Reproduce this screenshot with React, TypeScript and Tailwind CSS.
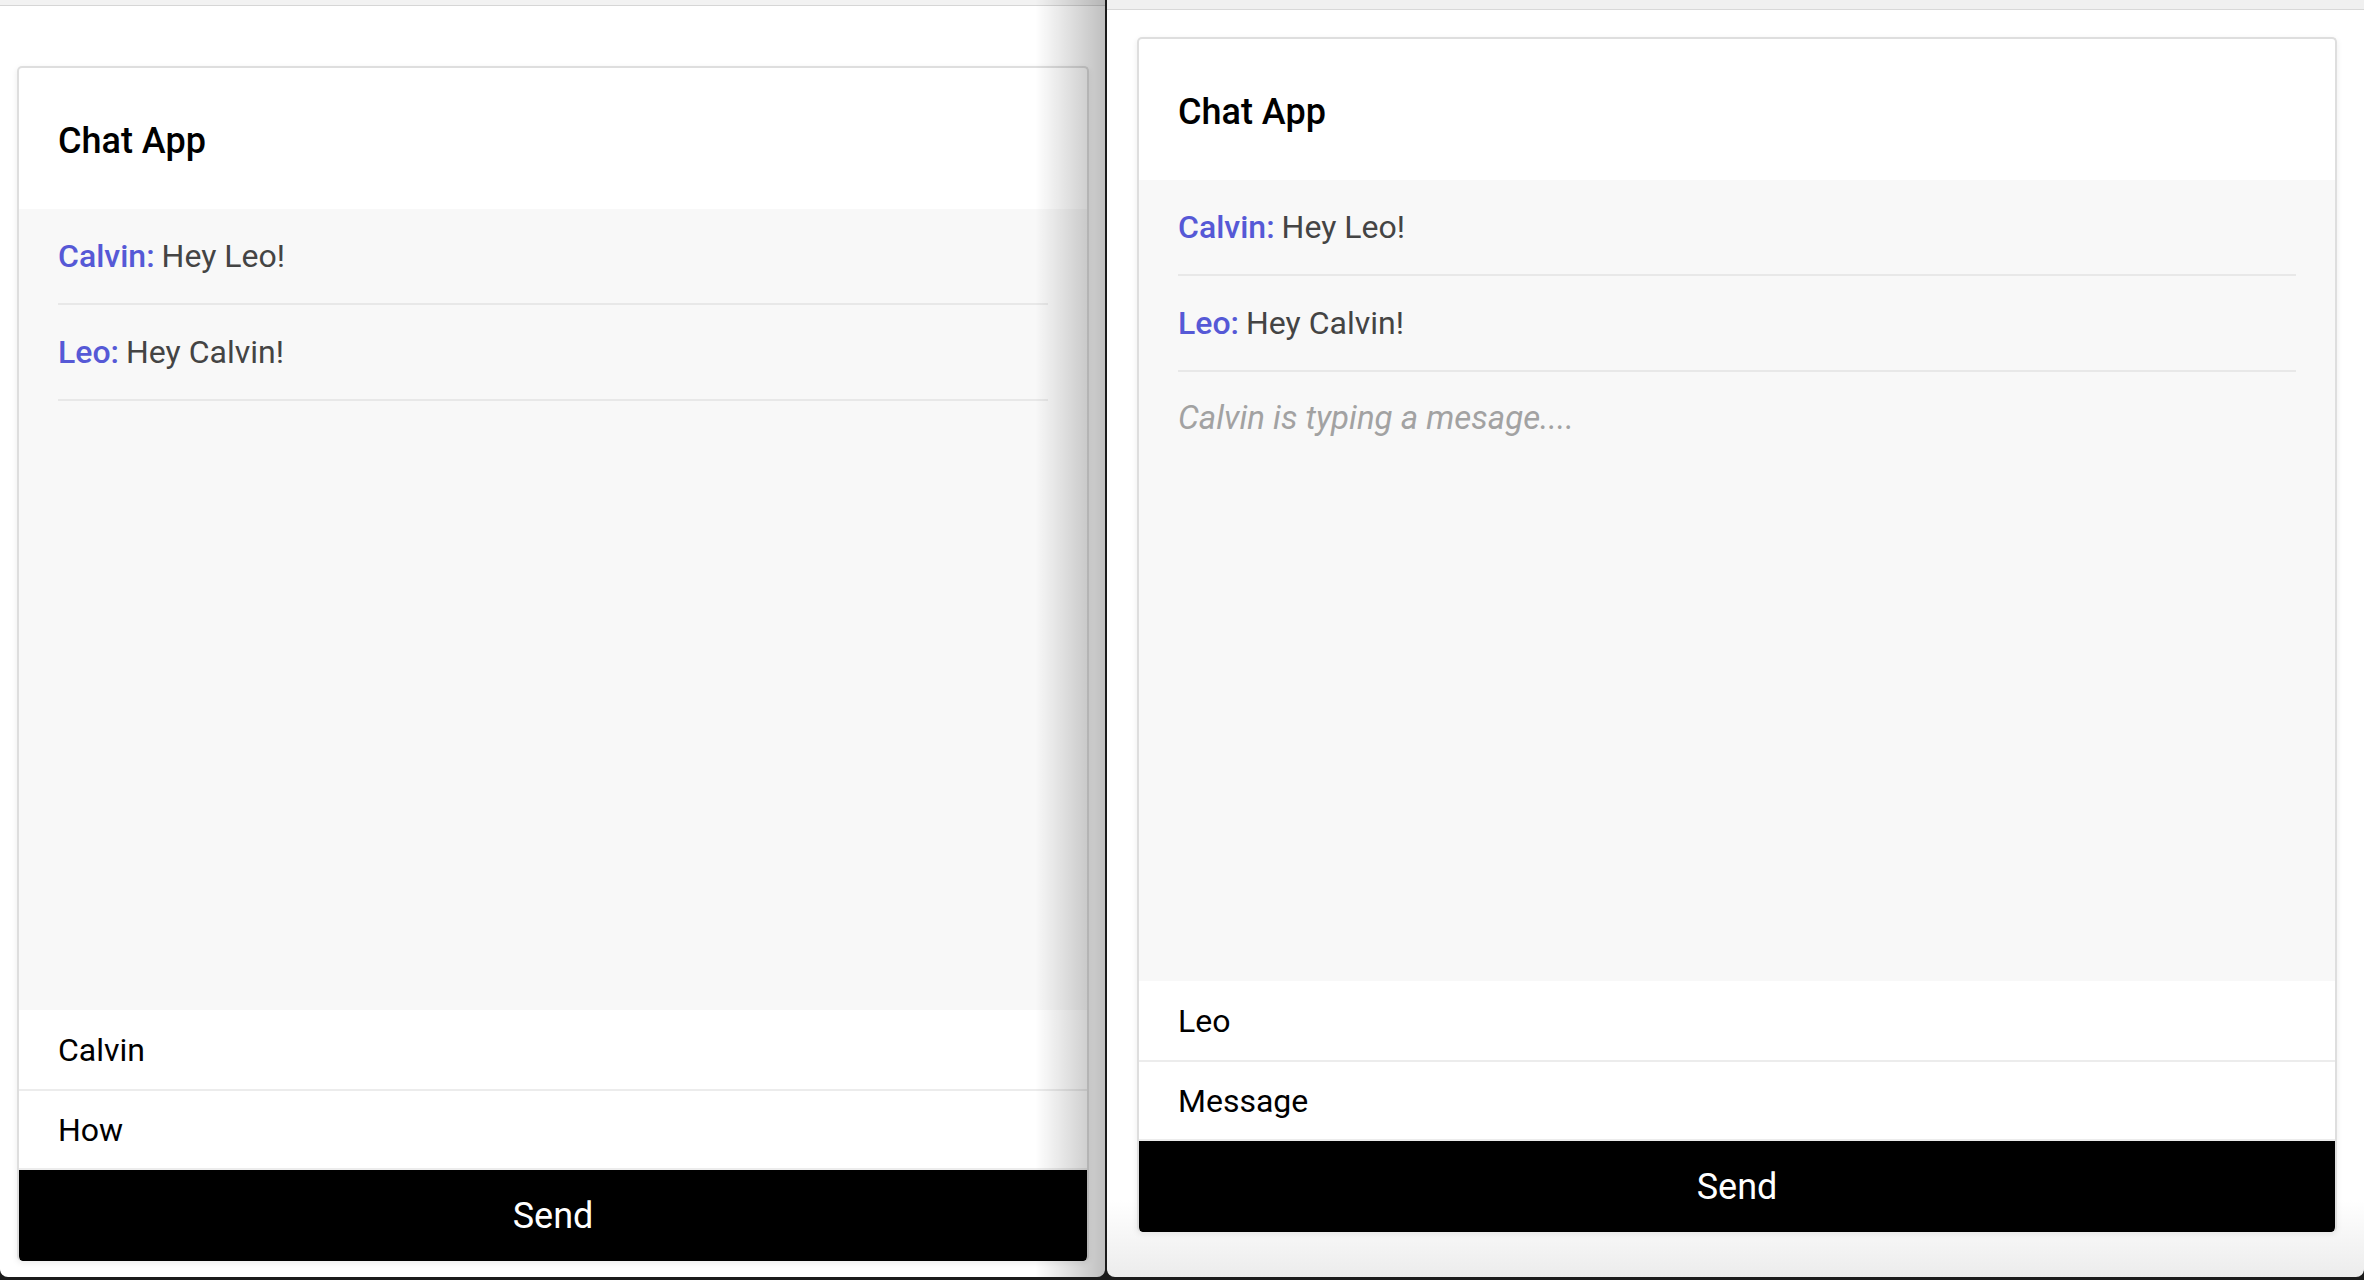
import React from "react";

type Message = { author: string; text: string };

const MESSAGES: Message[] = [
  { author: "Calvin", text: "Hey Leo!" },
  { author: "Leo", text: "Hey Calvin!" },
];

function ChatCard({
  username,
  draft,
  typing,
}: {
  username: string;
  draft: string;
  typing?: string;
}) {
  return (
    <div className="flex flex-col h-[1195px] rounded-[5px] border-2 border-b-0 border-[#dedede] bg-white overflow-hidden shadow-[0_2px_6px_rgba(0,0,0,0.08)]">
      <div className="flex items-center h-[141px] pl-[39px] pt-[4px] shrink-0">
        <h1 className="text-[36px] font-medium text-black">Chat App</h1>
      </div>
      <div className="flex flex-col grow min-h-0 bg-[#f8f8f8] px-[39px]">
        {MESSAGES.map((m) => (
          <div
            key={m.author}
            className="flex items-center h-[96px] border-b-2 border-[#e8e8e8] text-[32px] leading-none"
          >
            <span className="font-medium text-[#5659d6]">{m.author}:</span>
            <span className="ml-[7px] text-[#444444]">{m.text}</span>
          </div>
        ))}
        {typing && (
          <div className="flex items-center h-[92px] text-[33px] italic text-[#a2a2a2]">
            {typing}
          </div>
        )}
      </div>
      <input
        className="h-[79px] shrink-0 px-[39px] pt-[1px] text-[32px] text-black bg-white outline-none placeholder:text-black"
        defaultValue={username}
      />
      <input
        className="h-[81px] shrink-0 px-[39px] border-y-2 border-[#ececec] text-[32px] text-black bg-white outline-none placeholder:text-black"
        defaultValue={draft}
        placeholder="Message"
      />
      <button className="h-[91px] shrink-0 bg-black text-white text-[36px] rounded-b-[4px]">
        Send
      </button>
    </div>
  );
}

export default function App() {
  return (
    <div
      className="flex w-[2364px] h-[1280px] bg-[#1b1b1b] overflow-hidden"
      style={{ fontFamily: "Roboto, 'Liberation Sans', sans-serif" }}
    >
      {/* left browser window */}
      <div className="relative flex flex-col w-[1105px] h-[1277px] bg-white rounded-b-[8px] overflow-hidden">
        <div className="h-[6px] shrink-0 bg-[#f2f2f2] border-b border-[#d6d6d6]" />
        <div className="pl-[17px] pt-[60px] w-[1089px]">
          <ChatCard username="Calvin" draft="How" />
        </div>
        <div className="pointer-events-none absolute top-0 right-0 bottom-0 w-[70px] bg-gradient-to-r from-transparent to-black/25" />
      </div>

      <div className="w-[2px] shrink-0" />

      {/* right browser window */}
      <div className="flex flex-col w-[1257px] h-[1277px] rounded-b-[8px] overflow-hidden bg-[linear-gradient(to_bottom,#ffffff_94%,#ececec)]">
        <div className="h-[10px] shrink-0 bg-[#f0f0f0] border-b border-[#d8d8d8]" />
        <div className="pl-[30px] pt-[27px] w-[1230px]">
          <ChatCard
            username="Leo"
            draft=""
            typing="Calvin is typing a mesage...."
          />
        </div>
      </div>
    </div>
  );
}
